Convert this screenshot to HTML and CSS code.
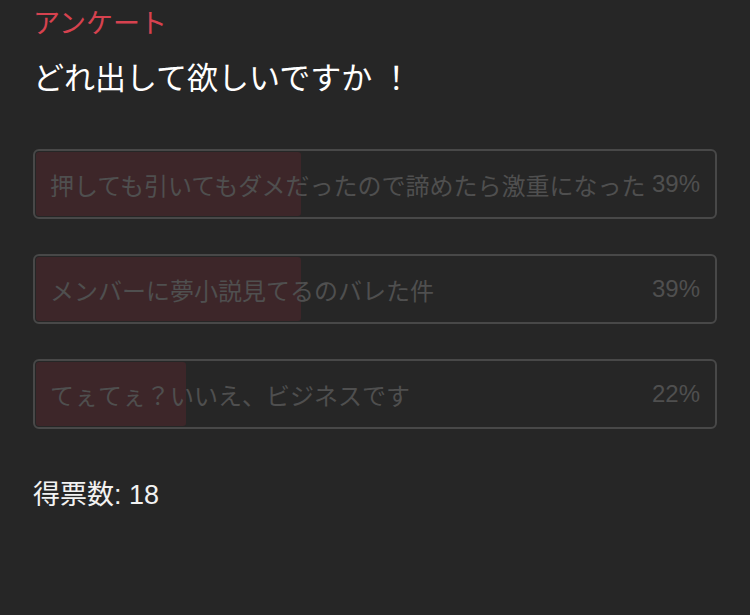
FILE: index.html
```html
<!DOCTYPE html>
<html lang="ja">
<head>
<meta charset="utf-8">
<link rel="stylesheet" href="styles.css">
</head>
<body>
<div class="poll">
  <div class="label">アンケート</div>
  <div class="question">どれ出して欲しいですか ！</div>
  <div class="options">
    <div class="option">
      <div class="fill" style="width:39%"></div>
      <span class="text">押しても引いてもダメだったので諦めたら激重になった</span>
      <span class="pct">39%</span>
    </div>
    <div class="option">
      <div class="fill" style="width:39%"></div>
      <span class="text">メンバーに夢小説見てるのバレた件</span>
      <span class="pct">39%</span>
    </div>
    <div class="option">
      <div class="fill" style="width:22%"></div>
      <span class="text">てぇてぇ？いいえ、ビジネスです</span>
      <span class="pct">22%</span>
    </div>
  </div>
  <div class="count">得票数: 18</div>
</div>
</body>
</html>
```
FILE: styles.css
```css
html, body {
  margin: 0;
  padding: 0;
  background: #262626;
  height: 100%;
}
body {
  font-family: "Liberation Sans", "Noto Sans CJK JP", sans-serif;
}
.poll {
  padding: 0 33px;
  display: flex;
  flex-direction: column;
}
.label {
  color: #d6424f;
  font-size: 27px;
  line-height: 48px;
  height: 48px;
}
.question {
  margin-top: 11px;
  color: #ffffff;
  font-size: 31px;
  line-height: 40px;
  height: 40px;
}
.options {
  margin-top: 50px;
  display: flex;
  flex-direction: column;
  gap: 35px;
}
.option {
  position: relative;
  height: 70px;
  box-sizing: border-box;
  border: 2px solid #484848;
  border-radius: 6px;
  display: flex;
  align-items: center;
  justify-content: space-between;
  padding: 0 15px;
  color: #4f4f4f;
  font-size: 24px;
}
.fill {
  position: absolute;
  left: 1px;
  top: 1px;
  bottom: 1px;
  background: #3d2629;
  border-radius: 3px;
}
.text, .pct {
  position: relative;
  white-space: nowrap;
}
.count {
  margin-top: 48px;
  color: #f2f2f2;
  font-size: 27px;
  line-height: 36px;
}
```
